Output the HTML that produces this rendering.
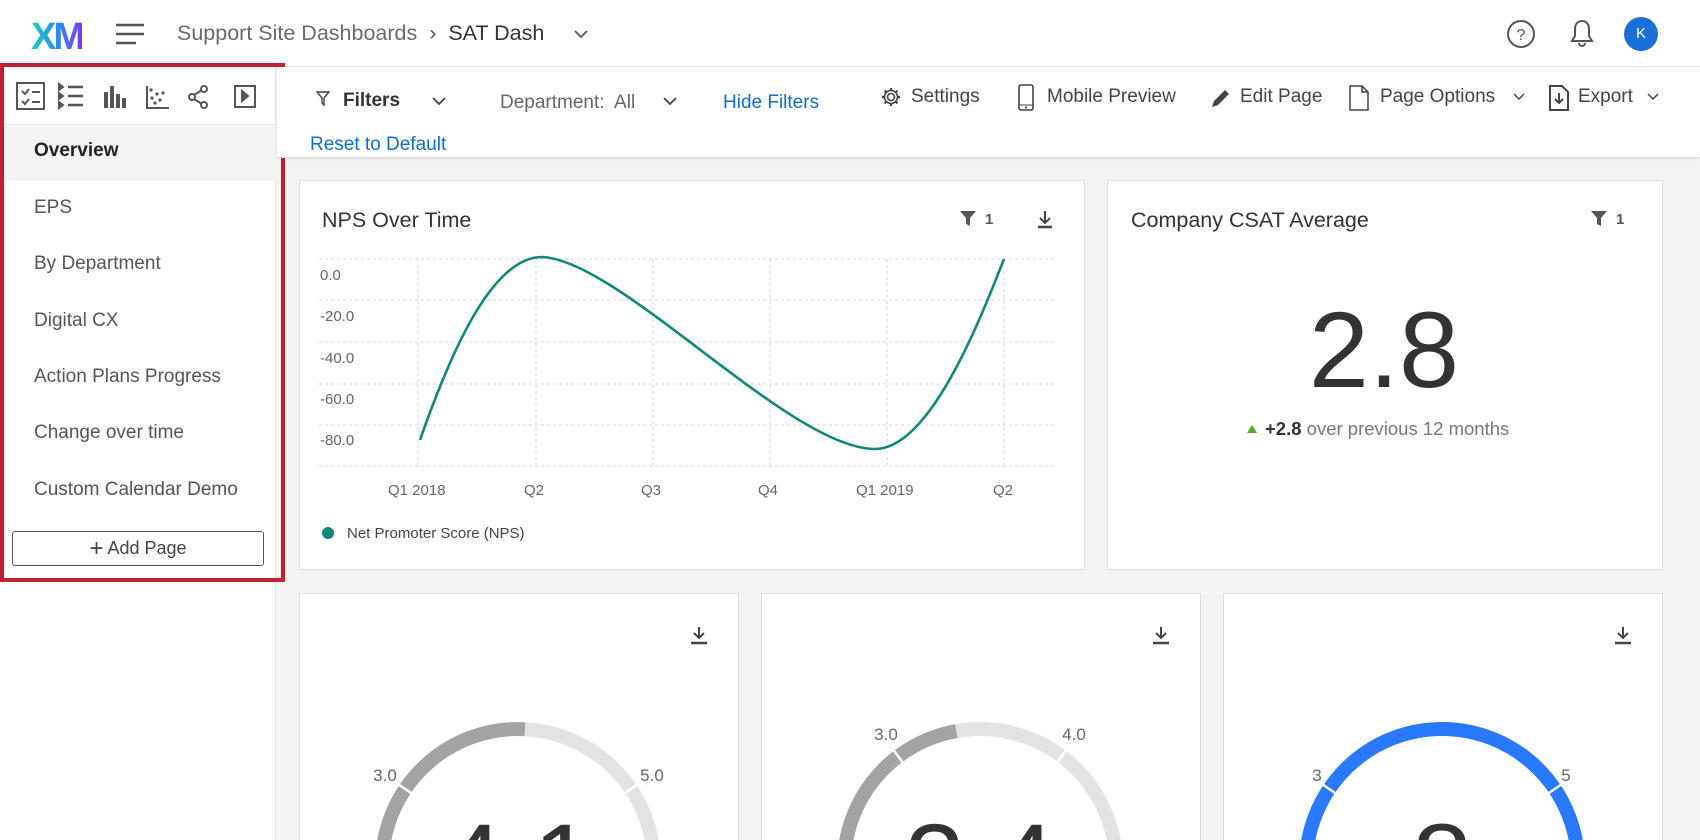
<!DOCTYPE html>
<html style="width:1700px;height:840px;overflow:hidden"><head><meta charset="utf-8"><style>
*{margin:0;padding:0;box-sizing:border-box}
body{width:1700px;height:840px;overflow:hidden;background:#f3f3f3;font-family:"Liberation Sans",sans-serif;color:#333;position:relative}
.abs{position:absolute}
.hdr{left:0;top:0;width:1700px;height:67px;background:#fff;border-bottom:1px solid #e6e6e6}
.side{left:0;top:67px;width:276px;height:773px;background:#fff;border-right:1px solid #e3e3e3}
.red{left:0;top:63px;width:285px;height:519px;border:4px solid #c41f2e}
.nav{position:absolute;left:34px;font-size:19px;color:#555}
.fbar{left:277px;top:67px;width:1423px;height:91px;background:#fff;border-bottom:1px solid #ddd;box-shadow:0 1px 3px rgba(0,0,0,.08)}
.card{position:absolute;background:#fff;border:1px solid #ddd}
.t{position:absolute;font-size:19px;color:#444;white-space:nowrap}
.ax{position:absolute;font-size:15px;color:#666}
.big{position:absolute;font-size:108px;line-height:1;color:#333;text-align:center;font-weight:300}
.clip{height:32px;overflow:hidden}
</style></head><body>
<div class="abs hdr"></div>
<div class="abs" style="left:31px;top:16px;font-size:38px;font-weight:bold;letter-spacing:-3px;background:linear-gradient(90deg,#19d3b6,#2a8cf5 50%,#7a3cf5);-webkit-background-clip:text;color:transparent">XM</div>
<svg class="abs" style="left:116px;top:22px" width="28" height="24"><g stroke="#555" stroke-width="2.5"><line x1="0" y1="3" x2="28" y2="3"/><line x1="0" y1="12" x2="28" y2="12"/><line x1="0" y1="21" x2="20" y2="21"/></g></svg>
<div class="t" style="left:177px;top:21px;font-size:21.5px;color:#6a6a6a">Support Site Dashboards &nbsp;<span style="color:#555">&#8250;</span>&nbsp; <span style="color:#333">SAT Dash</span></div>
<svg class="abs" style="left:574px;top:30px" width="14" height="9"><path d="M1 1l6 6 6-6" stroke="#555" stroke-width="1.8" fill="none"/></svg>
<svg class="abs" style="left:1506px;top:19px" width="30" height="30"><circle cx="15" cy="15" r="13" stroke="#555" stroke-width="2" fill="none"/><text x="15" y="21" font-size="16" text-anchor="middle" fill="#555" font-family="Liberation Sans">?</text></svg>
<svg class="abs" style="left:1569px;top:18px" width="26" height="30"><path d="M13 3c-5 0-7 4-7 8v7l-3 5h20l-3-5v-7c0-4-2-8-7-8zM10 25a3 3 0 0 0 6 0" stroke="#555" stroke-width="2" fill="none"/></svg>
<div class="abs" style="left:1624px;top:17px;width:34px;height:34px;border-radius:50%;background:#1a6fd8;color:#fff;font-size:15px;text-align:center;line-height:34px">K</div>

<div class="abs side"></div>
<div class="abs" style="left:0;top:67px;width:276px;height:58px;border-bottom:1px solid #e3e3e3"></div>
<svg class="abs" style="left:14px;top:80px" width="260" height="32" fill="none" stroke="#555" stroke-width="2">
<rect x="3" y="3" width="27" height="26"/><path d="M8 11l3 3 4-5M8 21l3 3 4-5M18 12h8M18 22h8"/>
<path d="M45 4l4 3-4 3zM45 13l4 3-4 3zM45 22l4 3-4 3z" fill="#555"/><path d="M54 7h15M54 16h15M54 25h15" stroke-width="2.5"/>
<path d="M92 28V12M98 28V6M104 28V14M110 28V18" stroke-width="4"/>
<g fill="#555" stroke="none"><circle cx="137" cy="10" r="1.6"/><circle cx="143" cy="14" r="1.6"/><circle cx="138" cy="18" r="1.6"/><circle cx="146" cy="20" r="1.6"/><circle cx="141" cy="23" r="1.6"/><circle cx="149" cy="13" r="1.6"/></g><path d="M133 6v22h22"/>
<circle cx="178" cy="17" r="3"/><circle cx="190" cy="9" r="3"/><circle cx="190" cy="25" r="3"/><path d="M180 15l8-5M180 19l8 5"/>
<rect x="221" y="6" width="20" height="21"/><path d="M228 11l6 5-6 5z" fill="#555"/>
</svg>
<div class="abs" style="left:0;top:126px;width:276px;height:55px;background:#f3f3f3;border-left:4px solid #1a6fd8"></div>
<div class="nav" style="top:140px;color:#222;font-weight:bold">Overview</div>
<div class="nav" style="top:197px">EPS</div>
<div class="nav" style="top:253px">By Department</div>
<div class="nav" style="top:310px">Digital CX</div>
<div class="nav" style="top:366px">Action Plans Progress</div>
<div class="nav" style="top:422px">Change over time</div>
<div class="nav" style="top:479px">Custom Calendar Demo</div>
<div class="abs" style="left:12px;top:531px;width:252px;height:35px;border:1px solid #555;border-radius:3px;text-align:center;font-size:18px;line-height:33px;color:#444"><span style="font-size:24px;vertical-align:-2px">+</span> Add Page</div>
<div class="abs red"></div>

<div class="abs fbar"></div>
<svg class="abs" style="left:316px;top:91px" width="14" height="16"><path d="M1 1h12l-5 6v7l-2-2V7z" stroke="#444" stroke-width="1.4" fill="none"/></svg>
<div class="t" style="left:343px;top:90px;font-weight:bold;color:#333">Filters</div>
<svg class="abs" style="left:432px;top:97px" width="14" height="9"><path d="M1 1l6 6 6-6" stroke="#444" stroke-width="1.8" fill="none"/></svg>
<div class="t" style="left:500px;top:92px;color:#666">Department:&nbsp; All</div>
<svg class="abs" style="left:663px;top:97px" width="14" height="9"><path d="M1 1l6 6 6-6" stroke="#444" stroke-width="1.8" fill="none"/></svg>
<div class="t" style="left:723px;top:92px;color:#0b6ed0">Hide Filters</div>
<div class="t" style="left:310px;top:134px;color:#0b6ed0">Reset to Default</div>
<svg class="abs" style="left:880px;top:86px" width="22" height="22"><circle cx="11" cy="11" r="3.5" stroke="#444" stroke-width="1.6" fill="none"/><path d="M11 2v3M11 17v3M2 11h3M17 11h3M4.6 4.6l2.2 2.2M15.2 15.2l2.2 2.2M4.6 17.4l2.2-2.2M15.2 6.8l2.2-2.2" stroke="#444" stroke-width="2.2"/><circle cx="11" cy="11" r="6.5" stroke="#444" stroke-width="1.6" fill="none"/></svg>
<div class="t" style="left:911px;top:86px">Settings</div>
<svg class="abs" style="left:1018px;top:84px" width="16" height="28"><rect x="1" y="1" width="14" height="25" rx="2" stroke="#444" stroke-width="1.6" fill="none"/><path d="M1 21h14" stroke="#444"/><circle cx="8" cy="23.5" r="1" fill="#444"/></svg>
<div class="t" style="left:1047px;top:86px">Mobile Preview</div>
<svg class="abs" style="left:1210px;top:87px" width="22" height="22"><path d="M2 20l2-6L15 3l4 4L8 18z" fill="#444"/></svg>
<div class="t" style="left:1240px;top:86px">Edit Page</div>
<svg class="abs" style="left:1349px;top:85px" width="20" height="26"><path d="M1 1h12l6 6v18H1z M13 1v6h6" stroke="#444" stroke-width="1.5" fill="none"/></svg>
<div class="t" style="left:1380px;top:86px">Page Options</div>
<svg class="abs" style="left:1513px;top:93px" width="12" height="8"><path d="M1 1l5 5 5-5" stroke="#444" stroke-width="1.5" fill="none"/></svg>
<svg class="abs" style="left:1549px;top:85px" width="20" height="26"><path d="M1 1h12l6 6v18H1z" stroke="#444" stroke-width="2" fill="none"/><path d="M10 8v10M6 14l4 4 4-4" stroke="#444" stroke-width="2" fill="none"/></svg>
<div class="t" style="left:1578px;top:86px">Export</div>
<svg class="abs" style="left:1647px;top:93px" width="12" height="8"><path d="M1 1l5 5 5-5" stroke="#444" stroke-width="1.5" fill="none"/></svg>

<div class="card" style="left:299px;top:180px;width:786px;height:390px"></div>
<div class="card" style="left:1107px;top:180px;width:556px;height:390px"></div>
<div class="card" style="left:299px;top:593px;width:440px;height:247px;border-bottom:none"></div>
<div class="card" style="left:761px;top:593px;width:440px;height:247px;border-bottom:none"></div>
<div class="card" style="left:1223px;top:593px;width:440px;height:247px;border-bottom:none"></div>

<div class="t" style="left:322px;top:208px;font-size:21.5px;color:#333">NPS Over Time</div>
<svg class="abs" style="left:959px;top:210px" width="20" height="18"><path d="M1 1h16l-6 7v8l-4-2V8z" fill="#555"/></svg>
<div class="t" style="left:985px;top:211px;font-size:15px;font-weight:bold;color:#555">1</div>
<svg class="abs" style="left:1036px;top:210px" width="18" height="20"><path d="M9 1v11M4 8l5 5 5-5" stroke="#444" stroke-width="2" fill="none"/><path d="M2 17h14" stroke="#444" stroke-width="2.5"/></svg>

<svg class="abs" style="left:0;top:0" width="1700" height="840">
<g stroke="#ddd" stroke-width="1.2" stroke-dasharray="3 3">
<line x1="319" y1="259" x2="1057" y2="259"/><line x1="319" y1="300" x2="1057" y2="300"/><line x1="319" y1="342" x2="1057" y2="342"/><line x1="319" y1="384" x2="1057" y2="384"/><line x1="319" y1="425" x2="1057" y2="425"/><line x1="319" y1="466" x2="1057" y2="466"/>
<line x1="418" y1="259" x2="418" y2="466"/><line x1="536" y1="259" x2="536" y2="466"/><line x1="653" y1="259" x2="653" y2="466"/><line x1="770" y1="259" x2="770" y2="466"/><line x1="887" y1="259" x2="887" y2="466"/><line x1="1004" y1="259" x2="1004" y2="466"/>
</g>
<path d="M420 440 C455 340 495 257 542 257 C620 260 790 449 875 449 C930 449 980 320 1004 259" stroke="#10877a" stroke-width="2.6" fill="none"/>
<circle cx="328" cy="533" r="6" fill="#10877a"/>
<g transform="translate(0,9)">
<g fill="none" stroke-width="14">
<path d="M382 856 A136 136 0 0 1 525 720.2" stroke="#a3a3a3"/>
<path d="M525 720.2 A136 136 0 0 1 654 856" stroke="#e3e3e3"/>
<path d="M844 856 A136 136 0 0 1 956.4 722.1" stroke="#a3a3a3"/>
<path d="M956.4 722.1 A136 136 0 0 1 1116 856" stroke="#e3e3e3"/>
<path d="M1306 856 A136 136 0 0 1 1578 856" stroke="#2979ff"/>
</g>
<g stroke="#fff" stroke-width="2.5">
<line x1="413.5" y1="785.6" x2="397" y2="774.4"/><line x1="622.5" y1="785.6" x2="639" y2="774.4"/>
<line x1="904.2" y1="755.4" x2="892.1" y2="739.3"/><line x1="1055.8" y1="755.4" x2="1067.9" y2="739.3"/>
<line x1="1337.5" y1="785.6" x2="1321" y2="774.4"/><line x1="1546.5" y1="785.6" x2="1563" y2="774.4"/>
</g>
<g font-family="Liberation Sans" font-size="17" fill="#666" text-anchor="middle">
<text x="385" y="772">3.0</text><text x="652" y="772">5.0</text>
<text x="886" y="731">3.0</text><text x="1074" y="731">4.0</text>
<text x="1317" y="772">3</text><text x="1566" y="772">5</text>
</g>
</g>
<g stroke="#444" stroke-width="2" fill="none">
<path d="M699 627v11M694 633l5 5 5-5"/><path d="M691 643h16" stroke-width="2.5"/>
<path d="M1161 627v11M1156 633l5 5 5-5"/><path d="M1153 643h16" stroke-width="2.5"/>
<path d="M1623 627v11M1618 633l5 5 5-5"/><path d="M1615 643h16" stroke-width="2.5"/>
</g>
</svg>
<div class="ax" style="left:320px;top:267px">0.0</div>
<div class="ax" style="left:320px;top:308px">-20.0</div>
<div class="ax" style="left:320px;top:350px">-40.0</div>
<div class="ax" style="left:320px;top:391px">-60.0</div>
<div class="ax" style="left:320px;top:432px">-80.0</div>
<div class="ax" style="left:388px;top:482px">Q1 2018</div>
<div class="ax" style="left:524px;top:482px">Q2</div>
<div class="ax" style="left:641px;top:482px">Q3</div>
<div class="ax" style="left:758px;top:482px">Q4</div>
<div class="ax" style="left:856px;top:482px">Q1 2019</div>
<div class="ax" style="left:993px;top:482px">Q2</div>
<div class="ax" style="left:347px;top:525px;color:#444">Net Promoter Score (NPS)</div>

<div class="t" style="left:1131px;top:208px;font-size:21.5px;color:#333">Company CSAT Average</div>
<svg class="abs" style="left:1590px;top:210px" width="20" height="18"><path d="M1 1h16l-6 7v8l-4-2V8z" fill="#555"/></svg>
<div class="t" style="left:1616px;top:211px;font-size:15px;font-weight:bold;color:#555">1</div>
<div class="big" style="left:1184px;width:400px;top:296px">2.8</div>
<svg class="abs" style="left:1246px;top:424px" width="12" height="10"><path d="M6 1l5 8H1z" fill="#4caf1e"/></svg>
<div class="t" style="left:1265px;top:418px;font-size:18.5px;color:#777"><b style="color:#333">+2.8</b> over previous 12 months</div>

<div class="big clip" style="left:318px;width:400px;top:808px">4.1</div>
<div class="big clip" style="left:780px;width:400px;top:808px">3.4</div>
<div class="big clip" style="left:1242px;width:400px;top:808px">8</div>
</body></html>
